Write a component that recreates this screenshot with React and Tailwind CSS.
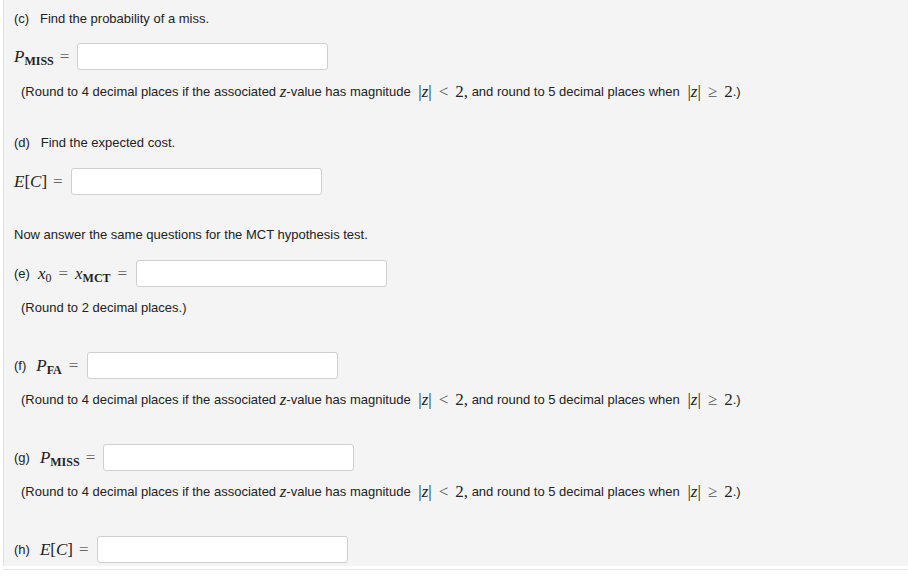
import React from 'react';

const sans = { fontFamily: '"Liberation Sans", Arial, sans-serif' };

function M({ children, className = '' }) {
  return (
    <span className={`text-[17px] text-[#222] ${className}`} style={{ fontFamily: '"Liberation Serif", "Times New Roman", serif' }}>
      {children}
    </span>
  );
}

function Sub({ children }) {
  return <span className="relative top-[3px] text-[12px] font-bold">{children}</span>;
}

function Box({ className = '' }) {
  return <div className={`h-[27px] w-[251px] rounded-[3px] border border-[#cfcfcf] bg-white ${className}`} />;
}

function Round() {
  return (
    <div className="ml-[7px] flex h-4 items-center whitespace-pre text-[13px] leading-4 text-[#222]">
      <span>(Round to 4 decimal places if the associated </span>
      <M className="italic">z</M>
      <span>-value has magnitude </span>
      <M className="ml-[4px]">|<span className="italic">z</span>|<span className="mx-[7px] text-[#555]">&lt;</span>2,</M>
      <span> and round to 5 decimal places when </span>
      <M className="ml-[4px]">|<span className="italic">z</span>|<span className="mx-[7px] text-[#555]">≥</span>2</M>
      <span>.)</span>
    </div>
  );
}

function Eq({ className = 'mx-[6px]' }) {
  return <M className={`${className} text-[#666]`}>=</M>;
}

export default function App() {
  return (
    <div className="w-[908px] h-[587px] bg-white pl-[3px]" style={sans}>
      <div className="flex h-[566px] flex-col border-l border-[#e2e2e2] bg-[#f4f4f4] pl-[10px] text-[13px] text-[#222]">
        <div className="mt-[11px] h-4 leading-4">(c)&nbsp;&nbsp; Find the probability of a miss.</div>

        <div className="mt-4 flex h-[27px] items-center">
          <M><span className="italic">P</span><Sub>MISS</Sub></M>
          <Eq />
          <Box className="ml-[2px]" />
        </div>

        <div className="mt-[14px]"><Round /></div>

        <div className="mt-[35px] h-4 leading-4">(d)&nbsp;&nbsp; Find the expected cost.</div>

        <div className="mt-[17px] flex h-[27px] items-center">
          <M><span className="italic">E</span>[<span className="italic">C</span>]</M>
          <Eq />
          <Box className="ml-[2px]" />
        </div>

        <div className="mt-8 h-4 leading-4">Now answer the same questions for the MCT hypothesis test.</div>

        <div className="mt-[17px] flex h-[27px] items-center">
          <span className="mr-[8px]">(e)</span>
          <M><span className="italic">x</span><span className="relative top-[3px] text-[12px]">0</span></M>
          <Eq className="mx-[7px]" />
          <M><span className="italic">x</span><Sub>MCT</Sub></M>
          <Eq className="mx-[7px]" />
          <Box className="ml-[2px]" />
        </div>

        <div className="mt-[13px] ml-[7px] h-4 leading-4">(Round to 2 decimal places.)</div>

        <div className="mt-9 flex h-[27px] items-center">
          <span className="mr-[10px]">(f)</span>
          <M><span className="italic">P</span><Sub>FA</Sub></M>
          <Eq className="mx-[7px]" />
          <Box className="ml-[2px]" />
        </div>

        <div className="mt-[13px]"><Round /></div>

        <div className="mt-9 flex h-[27px] items-center">
          <span className="mr-[10px]">(g)</span>
          <M><span className="italic">P</span><Sub>MISS</Sub></M>
          <Eq />
          <Box className="ml-[2px]" />
        </div>

        <div className="mt-[13px]"><Round /></div>

        <div className="mt-9 flex h-[27px] items-center">
          <span className="mr-[10px]">(h)</span>
          <M><span className="italic">E</span>[<span className="italic">C</span>]</M>
          <Eq />
          <Box className="ml-[2px]" />
        </div>
      </div>
      <div className="mt-[3px] h-px bg-[#e6e6e6]" />
    </div>
  );
}
